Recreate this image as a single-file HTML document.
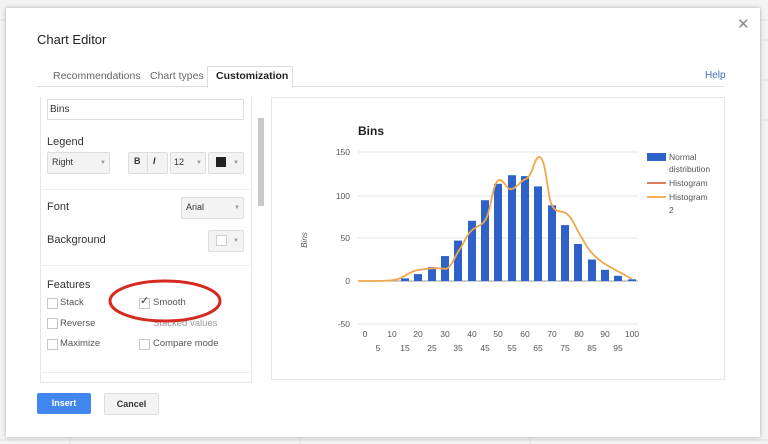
<!DOCTYPE html>
<html><head><meta charset="utf-8"><style>
body{margin:0;width:768px;height:444px;overflow:hidden;background:#f3f3f3;font-family:"Liberation Sans",Arial,sans-serif;position:relative}
.a{position:absolute}
.dlg{left:6px;top:8px;width:754px;height:429px;background:#fff;box-shadow:0 0 4px rgba(0,0,0,.3)}
.t{font-size:11px;color:#333}
.btn{background:#f3f3f3;border:1px solid #ddd;border-radius:2px}
.cb{width:9px;height:9px;border:1px solid #c6c6c6;background:#fff}
.car{font-size:6px;color:#999}
</style></head><body>
<svg class="a" style="left:0;top:0" width="768" height="444">
<g stroke="#dcdcdc" stroke-width="1">
<line x1="0" y1="20" x2="768" y2="20"/><line x1="0" y1="440" x2="768" y2="440"/>
<line x1="70" y1="437" x2="70" y2="444"/><line x1="300" y1="437" x2="300" y2="444"/><line x1="530" y1="437" x2="530" y2="444"/>
<line x1="762" y1="40" x2="768" y2="40"/><line x1="762" y1="80" x2="768" y2="80"/><line x1="762" y1="120" x2="768" y2="120"/>
</g></svg>
<div class="a dlg"></div>
<div class="a" style="left:37px;top:32px;font-size:13px;color:#222">Chart Editor</div>
<div class="a" style="left:737px;top:15px;font-size:15px;color:#888">✕</div>
<div class="a" style="left:37px;top:86px;width:687px;height:1px;background:#ddd"></div>
<div class="a t" style="left:53px;top:70px;color:#666;font-size:10.5px">Recommendations</div>
<div class="a t" style="left:150px;top:70px;color:#666;font-size:10.5px">Chart types</div>
<div class="a" style="left:207px;top:66px;width:84px;height:21px;background:#fff;border:1px solid #ddd;border-bottom:none"></div>
<div class="a t" style="left:216px;top:70px;font-weight:bold;font-size:10.5px;color:#222">Customization</div>
<div class="a" style="left:705px;top:70px;font-size:10px;color:#3b6fc7">Help</div>
<div class="a" style="left:40px;top:97px;width:210px;height:285px;border:1px solid #e6e6e6;border-top:none"></div>
<div class="a" style="left:40px;top:189px;width:210px;height:1px;background:#eee"></div>
<div class="a" style="left:40px;top:265px;width:210px;height:1px;background:#eee"></div>
<div class="a" style="left:40px;top:372px;width:210px;height:1px;background:#eee"></div>
<div class="a" style="left:258px;top:118px;width:6px;height:88px;background:#c8c8c8"></div>
<div class="a" style="left:47px;top:99px;width:195px;height:19px;border:1px solid #ddd"></div>
<div class="a t" style="left:50px;top:104px;font-size:10px">Bins</div>
<div class="a t" style="left:47px;top:136px">Legend</div>
<div class="a btn" style="left:47px;top:152px;width:61px;height:20px"></div>
<div class="a t" style="left:52px;top:157px;font-size:9px">Right</div><div class="a car" style="left:100px;top:160px">▼</div>
<div class="a btn" style="left:128px;top:152px;width:38px;height:20px"></div>
<div class="a" style="left:147px;top:152px;width:1px;height:22px;background:#ddd"></div>
<div class="a t" style="left:134px;top:156px;font-size:9px;font-weight:bold">B</div>
<div class="a t" style="left:153px;top:156px;font-size:9px;font-style:italic;font-weight:bold">I</div>
<div class="a btn" style="left:170px;top:152px;width:34px;height:20px"></div>
<div class="a t" style="left:174px;top:157px;font-size:9px">12</div><div class="a car" style="left:196px;top:160px">▼</div>
<div class="a btn" style="left:208px;top:152px;width:34px;height:20px"></div>
<div class="a" style="left:216px;top:157px;width:10px;height:10px;background:#222"></div><div class="a car" style="left:233px;top:160px">▼</div>
<div class="a t" style="left:47px;top:201px">Font</div>
<div class="a btn" style="left:181px;top:197px;width:61px;height:20px"></div>
<div class="a t" style="left:186px;top:202px;font-size:9px">Arial</div><div class="a car" style="left:234px;top:205px">▼</div>
<div class="a t" style="left:47px;top:234px">Background</div>
<div class="a btn" style="left:208px;top:230px;width:34px;height:20px"></div>
<div class="a" style="left:216px;top:235px;width:9px;height:9px;border:1px solid #ccc;background:#fff"></div><div class="a car" style="left:233px;top:238px">▼</div>
<div class="a t" style="left:47px;top:279px">Features</div>
<div class="a cb" style="left:47px;top:298px"></div><div class="a t" style="left:60px;top:297px;font-size:9.5px;color:#555">Stack</div>
<div class="a cb" style="left:47px;top:318px"></div><div class="a t" style="left:60px;top:318px;font-size:9.5px;color:#555">Reverse</div>
<div class="a cb" style="left:47px;top:339px"></div><div class="a t" style="left:60px;top:338px;font-size:9.5px;color:#555">Maximize</div>
<div class="a cb" style="left:139px;top:298px"></div><div class="a t" style="left:140px;top:294px;font-size:11px">✓</div><div class="a t" style="left:153px;top:297px;font-size:9.5px;color:#555">Smooth</div>
<div class="a t" style="left:153px;top:318px;font-size:9.5px;color:#999">Stacked values</div>
<div class="a cb" style="left:139px;top:339px"></div><div class="a t" style="left:153px;top:338px;font-size:9.5px;color:#555">Compare mode</div>
<svg class="a" style="left:0;top:0" width="768" height="444"><ellipse cx="165" cy="301" rx="55" ry="20" fill="none" stroke="#d42a20" stroke-width="3"/></svg>
<div class="a" style="left:37px;top:393px;width:54px;height:21px;background:#4286f0;border-radius:2px;color:#fff;font-size:9px;font-weight:bold;text-align:center;line-height:21px">Insert</div>
<div class="a btn" style="left:104px;top:393px;width:53px;height:20px;font-size:9px;font-weight:bold;text-align:center;line-height:20px;color:#333">Cancel</div>
<div class="a" style="left:271px;top:97px;width:452px;height:281px;border:1px solid #e6e6e6"></div>
<svg class="a" style="left:0;top:0" width="768" height="444" font-family="Liberation Sans,Arial,sans-serif">
<text x="358" y="135" font-size="12" font-weight="bold" fill="#222">Bins</text>
<g stroke="#e3e3e3"><line x1="358" y1="152" x2="638" y2="152"/><line x1="358" y1="196" x2="638" y2="196"/><line x1="358" y1="238" x2="638" y2="238"/><line x1="358" y1="324" x2="638" y2="324"/></g>
<line x1="358" y1="281" x2="638" y2="281" stroke="#999"/>
<g font-size="8.5" fill="#555" text-anchor="end"><text x="350" y="155">150</text><text x="350" y="199">100</text><text x="350" y="241">50</text><text x="350" y="284">0</text><text x="350" y="327">-50</text></g>
<text transform="translate(307,240) rotate(-90)" font-size="8" font-style="italic" fill="#555" text-anchor="middle">Bins</text>
<g fill="#2f62c9">
<rect x="401" y="278.4" width="8" height="2.6"/><rect x="414" y="274.1" width="8" height="6.9"/><rect x="428" y="267.2" width="8" height="13.8"/><rect x="441" y="256.1" width="8" height="24.9"/><rect x="454" y="240.6" width="8" height="40.4"/><rect x="468" y="220.8" width="8" height="60.2"/><rect x="481" y="200.2" width="8" height="80.8"/><rect x="494" y="183.8" width="8" height="97.2"/><rect x="508" y="175.2" width="8" height="105.8"/><rect x="521" y="176.1" width="8" height="104.9"/><rect x="534" y="186.4" width="8" height="94.6"/><rect x="548" y="205.3" width="8" height="75.7"/><rect x="561" y="225.1" width="8" height="55.9"/><rect x="574" y="244" width="8" height="37"/><rect x="588" y="259.5" width="8" height="21.5"/><rect x="601" y="269.8" width="8" height="11.2"/><rect x="614" y="275.8" width="8" height="5.2"/><rect x="628" y="279.3" width="8" height="1.7"/>
</g>
<path d="M358,281 L365,281 C380,281 392,281 398,279 C405,277 410,271 418,270 C425,269 438,267 445,269 C452,268 455,255 460,249 C465,241 468,232 475,228 C480,225 485,224 488,214 C492,200 494,181 499,180 C504,179 507,191 512,189 C518,187 521,180 526,179 C533,175 534,158 539,157 C545,157 546,180 550,200 C553,210 556,211 563,212 C572,214 576,230 582,238 C588,250 595,258 605,264 C615,270 625,275 632,279" fill="none" stroke="#f0a64a" stroke-width="1.8"/>
<g font-size="8.5" fill="#555" text-anchor="middle">
<text x="365" y="337">0</text><text x="392" y="337">10</text><text x="418" y="337">20</text><text x="445" y="337">30</text><text x="472" y="337">40</text><text x="498" y="337">50</text><text x="525" y="337">60</text><text x="552" y="337">70</text><text x="579" y="337">80</text><text x="605" y="337">90</text><text x="632" y="337">100</text>
<text x="378" y="351">5</text><text x="405" y="351">15</text><text x="432" y="351">25</text><text x="458" y="351">35</text><text x="485" y="351">45</text><text x="512" y="351">55</text><text x="538" y="351">65</text><text x="565" y="351">75</text><text x="592" y="351">85</text><text x="618" y="351">95</text>
</g>
<rect x="647" y="153" width="19" height="8" fill="#2f62c9"/>
<line x1="647" y1="183" x2="666" y2="183" stroke="#d4502a" stroke-width="1.5"/>
<line x1="647" y1="197" x2="666" y2="197" stroke="#f0a64a" stroke-width="1.8"/>
<g font-size="8.5" fill="#555"><text x="669" y="160">Normal</text><text x="669" y="172">distribution</text><text x="669" y="186">Histogram</text><text x="669" y="200">Histogram</text><text x="669" y="213">2</text></g>
</svg>
</body></html>
